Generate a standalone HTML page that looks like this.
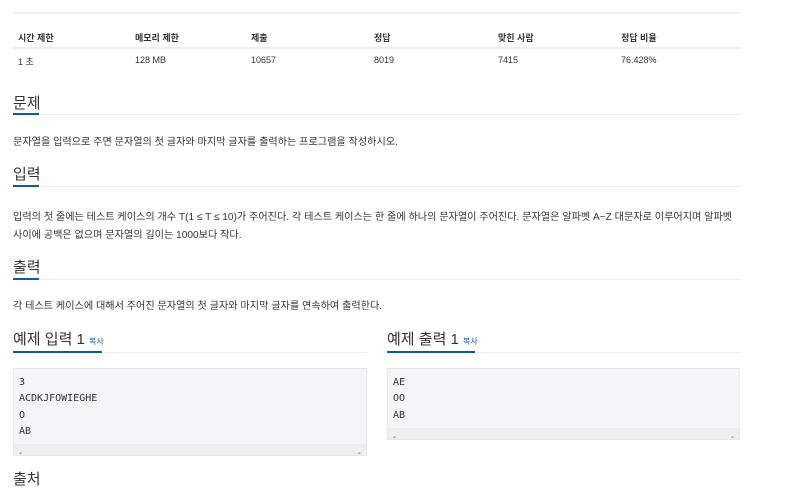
<!DOCTYPE html>
<html><head><meta charset="utf-8"><style>
*{margin:0;padding:0;box-sizing:border-box}
body{width:800px;height:482px;overflow:hidden;background:#fff;font-family:"Liberation Sans","Noto Sans CJK KR",sans-serif;color:#333;position:relative}
.a{position:absolute;white-space:nowrap}
.th{font-size:9px;font-weight:bold;top:31px}
.td{font-size:9px;top:55px}
h2{position:absolute;font-size:15px;font-weight:normal;color:#333;left:13px}
.ul{position:absolute;height:1px;background:#eee}
.bl{position:absolute;height:2px;background:#0e5aa7}
.p{font-size:10.15px;color:#333;left:13px}
.pre{position:absolute;background:#f5f5f7;border:1px solid #e8e8ec;font-family:"DejaVu Sans Mono","Liberation Mono",monospace;font-size:10px;line-height:16.3px;padding:6px 5px;color:#333}
.sb{position:absolute;left:0;right:0;bottom:0;height:11px;background:#eeeef0;font-size:7px;color:#aaa}
</style></head><body>
<div class="ul" style="left:13px;top:12px;width:727px;height:2px;background:#f2f2f2"></div>
<div class="a th" style="left:18px">시간 제한</div>
<div class="a th" style="left:135px">메모리 제한</div>
<div class="a th" style="left:251px">제출</div>
<div class="a th" style="left:374px">정답</div>
<div class="a th" style="left:498px">맞힌 사람</div>
<div class="a th" style="left:621px">정답 비율</div>
<div class="ul" style="left:13px;top:47px;width:727px;height:2px;background:#eee"></div>
<div class="a td" style="left:18px">1 초</div>
<div class="a td" style="left:135px">128 MB</div>
<div class="a td" style="left:251px">10657</div>
<div class="a td" style="left:374px">8019</div>
<div class="a td" style="left:498px">7415</div>
<div class="a td" style="left:621px">76.428%</div>

<h2 style="top:92px">문제</h2>
<div class="ul" style="left:13px;top:114px;width:727px"></div><div class="bl" style="left:13px;top:113px;width:26px"></div>
<div class="a p" style="top:133px">문자열을 입력으로 주면 문자열의 첫 글자와 마지막 글자를 출력하는 프로그램을 작성하시오.</div>

<h2 style="top:163px">입력</h2>
<div class="ul" style="left:13px;top:186px;width:727px"></div><div class="bl" style="left:13px;top:185px;width:26px"></div>
<div class="a p" style="top:208px">입력의 첫 줄에는 테스트 케이스의 개수 T(1 ≤ T ≤ 10)가 주어진다. 각 테스트 케이스는 한 줄에 하나의 문자열이 주어진다. 문자열은 알파벳 A~Z 대문자로 이루어지며 알파벳</div>
<div class="a p" style="top:226px">사이에 공백은 없으며 문자열의 길이는 1000보다 작다.</div>

<h2 style="top:256px">출력</h2>
<div class="ul" style="left:13px;top:279px;width:727px"></div><div class="bl" style="left:13px;top:278px;width:26px"></div>
<div class="a p" style="top:297px">각 테스트 케이스에 대해서 주어진 문자열의 첫 글자와 마지막 글자를 연속하여 출력한다.</div>

<h2 style="top:328px">예제 입력 1 <span style="font-size:8px;color:#0e5aa7">복사</span></h2>
<div class="ul" style="left:13px;top:352px;width:354px"></div><div class="bl" style="left:13px;top:351px;width:89px"></div>
<h2 style="top:328px;left:387px">예제 출력 1 <span style="font-size:8px;color:#0e5aa7">복사</span></h2>
<div class="ul" style="left:387px;top:352px;width:353px"></div><div class="bl" style="left:387px;top:351px;width:88px"></div>

<div class="pre" style="left:13px;top:368px;width:354px;height:88px">3<br>ACDKJFOWIEGHE<br>O<br>AB<div class="sb"><span style="position:absolute;left:4px;top:1px">◂</span><span style="position:absolute;right:4px;top:1px">▸</span></div></div>
<div class="pre" style="left:387px;top:368px;width:353px;height:72px">AE<br>OO<br>AB<div class="sb"><span style="position:absolute;left:4px;top:1px">◂</span><span style="position:absolute;right:4px;top:1px">▸</span></div></div>

<h2 style="top:468px">출처</h2>
</body></html>
